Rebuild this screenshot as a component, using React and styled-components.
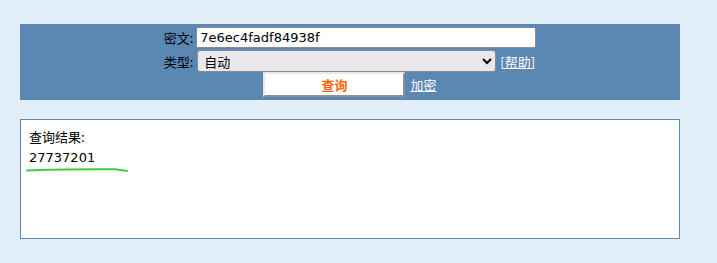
import styled, { createGlobalStyle } from "styled-components";

const GlobalStyle = createGlobalStyle`
  html, body {
    margin: 0;
    padding: 0;
    background: #e2eef7;
  }
  body {
    font-family: "DejaVu Sans", "Noto Sans CJK SC", sans-serif;
    font-size: 13px;
    color: #000;
  }
`;

const Page = styled.div`
  padding: 24px 0 0 20px;
  width: 660px;
`;

const SearchPanel = styled.form`
  background: #5b87b3;
  padding: 3px 0 3px;
  display: flex;
  flex-direction: column;
  align-items: center;
`;

const FieldGrid = styled.div`
  display: grid;
  grid-template-columns: auto auto;
  column-gap: 3px;
  row-gap: 2px;
  align-items: center;
`;

const Label = styled.label`
  text-align: right;
  font-family: "Noto Sans CJK SC", sans-serif;
  font-size: 13px;
  line-height: 21px;
`;

const TextInput = styled.input`
  box-sizing: border-box;
  width: 340px;
  height: 21px;
  border: 1px solid #8a8a92;
  border-radius: 2px;
  padding: 0 3px;
  font-family: "DejaVu Sans", sans-serif;
  font-size: 13px;
  background: #fff;
  outline: none;
`;

const SelectRow = styled.div`
  display: flex;
  align-items: center;
  gap: 4px;
`;

const Select = styled.select`
  box-sizing: border-box;
  width: 299px;
  height: 22px;
  margin-left: 1px;
  border: 1px solid #8a8a92;
  border-radius: 3px;
  background: #e9e8ed;
  font-family: "Noto Sans CJK SC", sans-serif;
  font-size: 13px;
  padding: 0 2px;
`;

const Link = styled.a`
  color: #fff;
  text-decoration: underline;
  font-family: "Noto Sans CJK SC", sans-serif;
  font-size: 13px;
  cursor: pointer;
`;

const ButtonRow = styled.div`
  display: flex;
  align-items: center;
  gap: 5px;
`;

const SubmitButton = styled.button`
  box-sizing: border-box;
  width: 142px;
  height: 25px;
  background: #fff;
  border-style: solid;
  border-width: 2px;
  border-color: #e8e8e8 #8f8f8f #8f8f8f #e8e8e8;
  color: #ff6600;
  font-weight: bold;
  font-family: "Noto Sans CJK SC", sans-serif;
  font-size: 13px;
  padding: 0;
`;

const ResultBox = styled.div`
  margin-top: 19px;
  box-sizing: border-box;
  height: 120px;
  background: #fff;
  border: 1px solid #5b87b3;
  padding: 7px 8px;
  line-height: 20px;
`;

const ResultTitle = styled.div`
  font-family: "Noto Sans CJK SC", sans-serif;
  font-size: 13px;
`;

const ResultValue = styled.div`
  position: relative;
  display: inline-block;
  margin-top: 1px;
  font-family: "DejaVu Sans", sans-serif;
  font-size: 13px;
`;

const Scribble = styled.svg`
  position: absolute;
  left: -3px;
  top: 19px;
  overflow: visible;
`;

export default function App() {
  return (
    <>
      <GlobalStyle />
      <Page>
        <SearchPanel onSubmit={(e) => e.preventDefault()}>
          <FieldGrid>
            <Label>密文:</Label>
            <TextInput defaultValue="7e6ec4fadf84938f" />
            <Label>类型:</Label>
            <SelectRow>
              <Select defaultValue="auto">
                <option value="auto">自动</option>
              </Select>
              <Link>[帮助]</Link>
            </SelectRow>
          </FieldGrid>
          <ButtonRow>
            <SubmitButton type="submit">查询</SubmitButton>
            <Link>加密</Link>
          </ButtonRow>
        </SearchPanel>
        <ResultBox>
          <ResultTitle>查询结果:</ResultTitle>
          <ResultValue>
            27737201
            <Scribble width="102" height="6">
              <path
                d="M1 3.5 C20 2.5 50 2 88 2.2 C94 2.3 95 4 101 3.8"
                fill="none"
                stroke="#3fcc3f"
                strokeWidth="2"
                strokeLinecap="round"
              />
            </Scribble>
          </ResultValue>
        </ResultBox>
      </Page>
    </>
  );
}
